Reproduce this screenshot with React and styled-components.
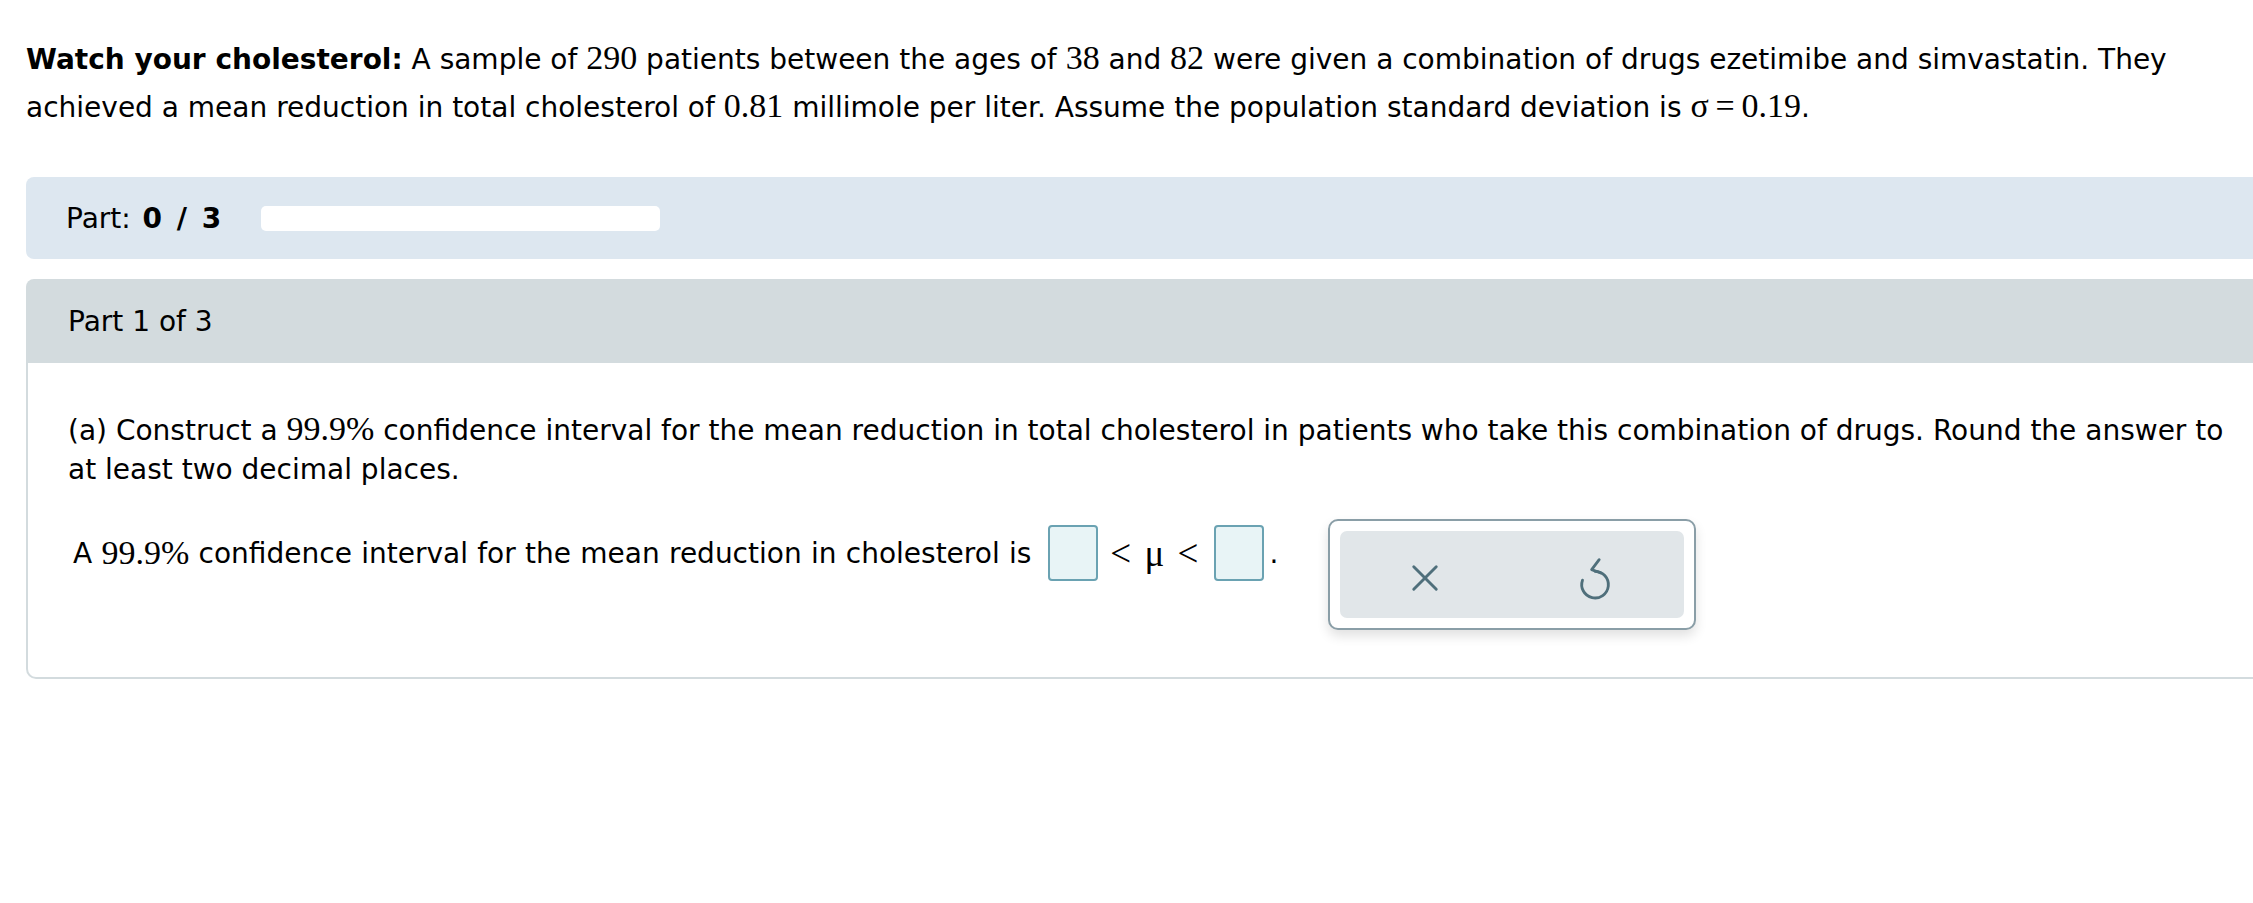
import styled, { createGlobalStyle } from "styled-components";

const GlobalStyle = createGlobalStyle`
  html, body {
    margin: 0;
    padding: 0;
    background: #ffffff;
    overflow: hidden;
  }
  body {
    font-family: "DejaVu Sans", Verdana, sans-serif;
    color: #000;
  }
`;

export default function App() {
  return (
    <>
      <GlobalStyle />
      <Page>
        <Intro>
          <strong>Watch your cholesterol:</strong> A sample of <M>290</M> patients
          between the ages of <M>38</M> and <M>82</M> were given a combination of
          drugs ezetimibe and simvastatin. They
          <br />
          achieved a mean reduction in total cholesterol of <M>0.81</M> millimole
          per liter. Assume the population standard deviation is{" "}
          <M>σ{"\u2009"}={"\u2009"}0.19</M>.
        </Intro>

        <ProgressBar>
          <span>
            Part: <Score>0 / 3</Score>
          </span>
          <Track />
        </ProgressBar>

        <PartHeader>Part 1 of 3</PartHeader>

        <PartBody>
          <Question>
            (a) Construct a <M>99.9%</M> confidence interval for the mean reduction
            in total cholesterol in patients who take this combination of drugs.
            Round the answer to
            <br />
            at least two decimal places.
          </Question>

          <AnswerRow>
            <AnswerText>
              A <M>99.9%</M> confidence interval for the mean reduction in
              cholesterol is
              <AnswerBox />
              <MathOp>&lt; μ &lt;</MathOp>
              <AnswerBox />
              <Dot>.</Dot>
            </AnswerText>

            <ToolPanel>
              <ToolInner>
                <ToolButton aria-label="clear">
                  <svg width="30" height="30" viewBox="0 0 24 24" fill="none"
                    stroke="#4f6f7b" strokeWidth="2.3" strokeLinecap="round">
                    <path d="M3 3 L21 21" />
                    <path d="M21 3 L3 21" />
                  </svg>
                </ToolButton>
                <ToolButton aria-label="undo">
                  <svg width="40" height="50" viewBox="0 0 24 30" fill="none"
                    stroke="#4f6f7b" strokeWidth="1.7" strokeLinecap="round"
                    strokeLinejoin="round">
                    <path d="M12 11 A8 8 0 1 1 4.5 16.3" />
                    <path d="M14.5 4 L10 10 L15.5 12" />
                  </svg>
                </ToolButton>
              </ToolInner>
            </ToolPanel>
          </AnswerRow>
        </PartBody>
      </Page>
    </>
  );
}

const Page = styled.div`
  width: 2265px;
  padding: 35px 0 0 26px;
  font-size: 28px;
`;

const M = styled.span`
  font-family: "Liberation Serif", "Times New Roman", serif;
  font-size: 34px;
`;

const Intro = styled.p`
  margin: 0;
  line-height: 46px;
  white-space: nowrap;
  strong {
    font-weight: bold;
  }
`;

const ProgressBar = styled.div`
  margin-top: 46px;
  height: 82px;
  background: #dde7f0;
  border-radius: 8px 0 0 8px;
  display: flex;
  align-items: center;
  padding-left: 40px;
  gap: 40px;
`;

const Score = styled.strong`
  font-weight: bold;
  margin-left: 3px;
  word-spacing: 5px;
`;

const Track = styled.div`
  width: 399px;
  height: 25px;
  background: #ffffff;
  border-radius: 5px;
`;

const PartHeader = styled.div`
  margin-top: 20px;
  height: 84px;
  background: #d3dbde;
  border-radius: 8px 0 0 0;
  display: flex;
  align-items: center;
  padding-left: 42px;
`;

const PartBody = styled.div`
  box-sizing: border-box;
  height: 316px;
  border: 2px solid #d3dbde;
  border-top: none;
  border-right: none;
  border-radius: 0 0 0 10px;
  padding: 46px 0 0 40px;
`;

const Question = styled.p`
  margin: 0;
  line-height: 39px;
  white-space: nowrap;
`;

const AnswerRow = styled.div`
  display: flex;
  align-items: flex-start;
  margin-top: 34px;
`;

const AnswerText = styled.div`
  display: flex;
  align-items: center;
  white-space: pre;
  padding-left: 5px;
  height: 56px;
  margin-top: 2px;
  word-spacing: 0.4px;
`;

const AnswerBox = styled.span`
  display: inline-block;
  width: 46px;
  height: 52px;
  margin: 0 8px 0 17px;
  background: #e8f4f6;
  border: 2px solid #6aa2b2;
  border-radius: 4px;
`;

const MathOp = styled.span`
  font-family: "Liberation Serif", "Times New Roman", serif;
  font-size: 37px;
  word-spacing: 4px;
  margin-left: 4px;
  margin-right: -1px;
`;

const Dot = styled.span`
  margin-left: -3px;
`;

const ToolPanel = styled.div`
  margin-left: 50px;
  margin-top: -4px;
  width: 368px;
  height: 111px;
  box-sizing: border-box;
  border: 2px solid #8a9ea7;
  border-radius: 10px;
  background: #fff;
  padding: 10px;
  box-shadow: 0 6px 12px rgba(0, 0, 0, 0.12);
`;

const ToolInner = styled.div`
  height: 100%;
  background: #e1e6e9;
  border-radius: 7px;
  display: flex;
  align-items: center;
  justify-content: space-between;
  padding: 0 69px 0 70px;
`;

const ToolButton = styled.button`
  background: none;
  border: none;
  padding: 0;
  margin-top: 6px;
  display: flex;
  align-items: center;
  justify-content: center;
  cursor: pointer;
`;
